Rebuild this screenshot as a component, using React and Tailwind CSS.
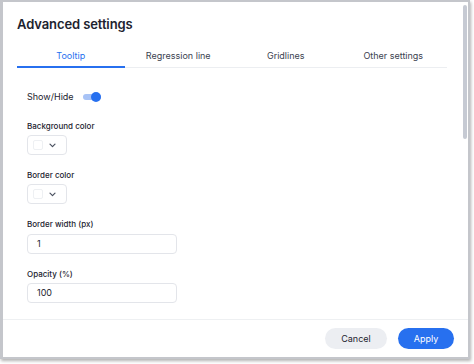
import React from 'react';

const tabs = ['Tooltip', 'Regression line', 'Gridlines', 'Other settings'];

const Chevron = () => (
    <svg width="7" height="5" viewBox="0 0 7 5" fill="none">
        <path d="M1 1.2l2.5 2.5 2.5-2.5" stroke="#4a5160" strokeWidth="1.2" strokeLinecap="round" strokeLinejoin="round" />
    </svg>
);

const ColorPicker = () => (
    <div className="flex h-[20px] w-[40px] items-center justify-between rounded-[4px] border border-[#e3e5ea] pl-[5px] pr-[10px]">
        <div className="h-[10px] w-[10px] rounded-[2px] border border-[#eef0f3] bg-white" />
        <Chevron />
    </div>
);

const Label = ({ children, className = '' }) => (
    <div className={`h-[12px] text-[8px] font-medium leading-[12px] text-[#1d232f] ${className}`}>{children}</div>
);

const TextBox = ({ value, className = '' }) => (
    <div className={`flex h-[20px] w-[150px] items-center rounded-[4px] border border-[#e3e5ea] px-[9px] text-[9px] text-[#1d232f] ${className}`}>
        {value}
    </div>
);

const App = () => {
    return (
        <div className="h-[364px] w-[474px] overflow-hidden bg-white" style={{ fontFamily: 'Inter, "Noto Sans", sans-serif' }}>
            <div className="relative flex h-[359px] w-[470px] flex-col border-b-2 border-l-[3px] border-r-2 border-t-2 border-[#c4c6cb] bg-white shadow-[1px_2px_3px_rgba(0,0,0,0.3)]">
                {/* scrollbar */}
                <div className="absolute right-[1px] top-[3px] h-[134px] w-[4px] rounded-full bg-[#c6cad3]" />

                <div className="flex-1">
                    <h1 className="ml-[14px] mt-[12px] h-[20px] text-[13px] font-semibold leading-[20px] tracking-[-0.1px] text-[#1d232f]">
                        Advanced settings
                    </h1>

                    <div className="ml-[14px] mt-[15px] flex w-[430px] border-b border-[#eceef1]">
                        {tabs.map((t, i) => (
                            <div
                                key={t}
                                className={`-mb-px flex-1 border-b-2 pb-[3px] text-center text-[9px] leading-[14px] ${
                                    i === 0 ? 'border-[#2770ef] text-[#2770ef]' : 'border-transparent text-[#3b4250]'
                                }`}
                            >
                                {t}
                            </div>
                        ))}
                    </div>

                    <div className="ml-[24px]">
                        <div className="mt-[22px] flex h-[14px] items-center">
                            <span className="text-[9px] text-[#1d232f]">Show/Hide</span>
                            <div className="relative ml-[9px] h-[6px] w-[18px] rounded-full bg-[#a8c3f6]">
                                <div className="absolute -top-[2px] right-0 h-[10px] w-[10px] rounded-full bg-[#2770ef]" />
                            </div>
                        </div>

                        <Label className="mt-[16px]">Background color</Label>
                        <div className="mt-[3px]"><ColorPicker /></div>

                        <Label className="mt-[14px]">Border color</Label>
                        <div className="mt-[3px]"><ColorPicker /></div>

                        <Label className="mt-[14px]">Border width (px)</Label>
                        <TextBox value="1" className="mt-[4px]" />

                        <Label className="mt-[14px]">Opacity (%)</Label>
                        <TextBox value="100" className="mt-[3px]" />
                    </div>
                </div>

                <div className="flex h-[38px] items-center justify-end gap-[11px] border-t border-[#eef0f2] pr-[14px]">
                    <button className="h-[21px] w-[62px] rounded-full bg-[#eceef2] text-[9px] text-[#1d232f]">Cancel</button>
                    <button className="h-[21px] w-[56px] rounded-full bg-[#2770ef] text-[9px] text-white">Apply</button>
                </div>
            </div>
        </div>
    );
};

export default App;
